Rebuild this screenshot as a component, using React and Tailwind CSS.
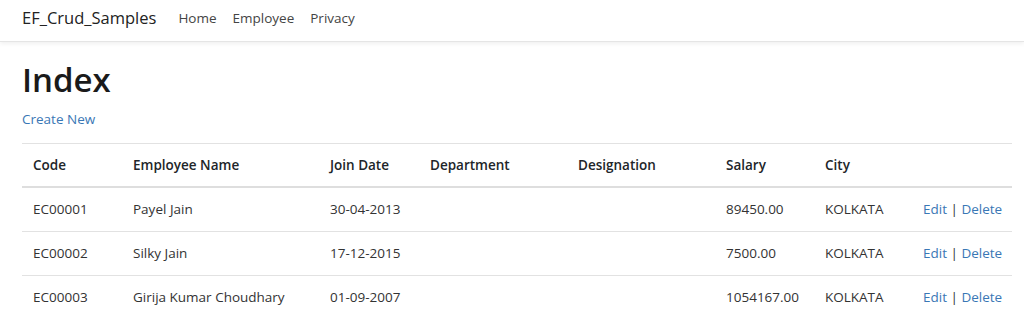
import React from 'react';

const employees = [
  { code: 'EC00001', name: 'Payel Jain', joined: '30-04-2013', salary: '89450.00', city: 'KOLKATA' },
  { code: 'EC00002', name: 'Silky Jain', joined: '17-12-2015', salary: '7500.00', city: 'KOLKATA' },
  { code: 'EC00003', name: 'Girija Kumar Choudhary', joined: '01-09-2007', salary: '1054167.00', city: 'KOLKATA' },
];

export default function App() {
  return (
    <div className="min-h-screen bg-white text-[#212529]" style={{ fontFamily: '"Open Sans", "Noto Sans", sans-serif' }}>
      {/* --- Navbar --- */}
      <nav className="h-[42px] border-b border-[#e5e5e5] shadow-[0_2px_4px_rgba(0,0,0,0.06)] bg-white">
        <div className="flex items-center h-full px-[22px] pb-[5px]">
          <span className="text-[16.5px] text-[#222] mr-[22px]">EF_Crud_Samples</span>
          <ul className="flex items-center gap-[16px] text-[13.5px] text-[#444]">
            <li>Home</li>
            <li>Employee</li>
            <li>Privacy</li>
          </ul>
        </div>
      </nav>

      <main className="px-[22px] pr-[12px]">
        <h1 className="text-[33px] font-semibold leading-none mt-[21px] text-[#1a1a1a]">Index</h1>
        <p className="mt-[17px] text-[13.5px] leading-none">
          <a className="text-[#3a77b5]">Create New</a>
        </p>

        <table className="w-full mt-[16px] border-collapse text-[13.5px] table-fixed">
          <colgroup>
            <col className="w-[100px]" />
            <col className="w-[197px]" />
            <col className="w-[100px]" />
            <col className="w-[148px]" />
            <col className="w-[148px]" />
            <col className="w-[99px]" />
            <col className="w-[98px]" />
            <col />
          </colgroup>
          <thead>
            <tr className="border-t border-[#e2e2e2] border-b-2 border-b-[#dedede] h-[44px] text-left">
              <th className="px-[11px] font-semibold">Code</th>
              <th className="px-[11px] font-semibold">Employee Name</th>
              <th className="px-[11px] font-semibold">Join Date</th>
              <th className="px-[11px] font-semibold">Department</th>
              <th className="px-[11px] font-semibold">Designation</th>
              <th className="px-[11px] font-semibold">Salary</th>
              <th className="px-[11px] font-semibold">City</th>
              <th className="px-[11px]"></th>
            </tr>
          </thead>
          <tbody>
            {employees.map((e, i) => (
              <tr key={e.code} className={`h-[44px] text-[#333] ${i < employees.length - 1 ? 'border-b border-[#e2e2e2]' : ''}`}>
                <td className="px-[11px]">{e.code}</td>
                <td className="px-[11px]">{e.name}</td>
                <td className="px-[11px]">{e.joined}</td>
                <td className="px-[11px]"></td>
                <td className="px-[11px]"></td>
                <td className="px-[11px]">{e.salary}</td>
                <td className="px-[11px]">{e.city}</td>
                <td className="px-[11px] whitespace-nowrap">
                  <a className="text-[#3a77b5]">Edit</a> | <a className="text-[#3a77b5]">Delete</a>
                </td>
              </tr>
            ))}
          </tbody>
        </table>
      </main>
    </div>
  );
}
